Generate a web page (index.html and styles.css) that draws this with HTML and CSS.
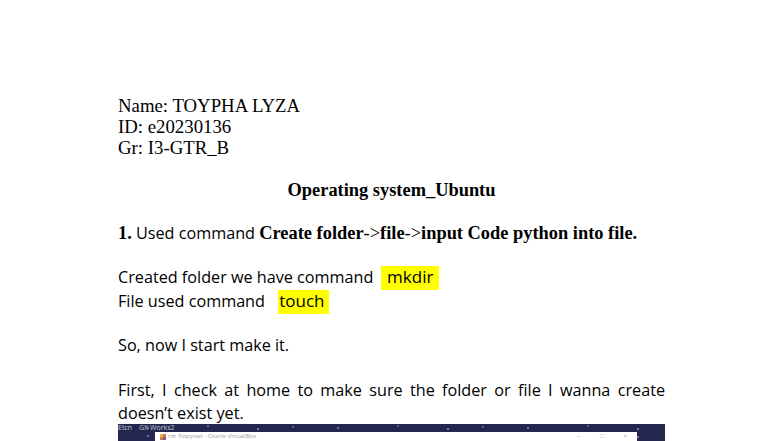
FILE: index.html
```html
<!DOCTYPE html>
<html lang="en">
<head>
<meta charset="utf-8">
<title>Operating system_Ubuntu</title>
<link rel="stylesheet" href="styles.css">
</head>
<body>
<main class="page">
  <section class="info">
    <p class="serif">Name: TOYPHA LYZA</p>
    <p class="serif">ID: e20230136</p>
    <p class="serif">Gr: I3-GTR_B</p>
  </section>
  <h1 class="title">Operating system_Ubuntu</h1>
  <p class="step"><b class="serif-b">1.</b> Used command <b class="serif-b">Create folder</b><span class="serif-b light">-&gt;</span><b class="serif-b">file</b><span class="serif-b light">-&gt;</span><b class="serif-b">input Code python into file.</b></p>
  <section class="commands">
    <p>Created folder we have command <mark class="hl hl-a">mkdir</mark></p>
    <p>File used command <mark class="hl hl-b">touch</mark></p>
  </section>
  <p class="para">So, now I start make it.</p>
  <p class="para just">First, I check at home to make sure the folder or file I wanna create doesn’t exist yet.</p>
  <div class="shot">
    <div class="shot-bar"><span>Etcn</span><span>GX Works2</span></div>
    <div class="win">
      <div class="win-title">
        <svg class="win-icon" viewBox="0 0 10 10"><rect width="10" height="10" fill="#c9803a"/><path d="M0 0h5v5H0z" fill="#e8b04a"/><path d="M5 5h5v5H5z" fill="#7a5a9a"/></svg>
        <span>rdr Flopyswt - Oracle VirtualBox</span>
        <span class="win-ctrls"><span>–</span><span>□</span><span>×</span></span>
      </div>
    </div>
  </div>
</main>
</body>
</html>
```
FILE: styles.css
```css
html, body { margin: 0; padding: 0; background: #fff; }
body { width: 784px; height: 441px; overflow: hidden; }
p, h1 { margin: 0; }
.page {
  box-sizing: border-box;
  width: 784px;
  height: 441px;
  padding: 95px 119px 0 118px;
  overflow: hidden;
  color: #000;
  font-family: "Open Sans", "Noto Sans", sans-serif;
  font-size: 16.2px;
  line-height: 21px;
}
.serif { font-family: "Liberation Serif", serif; font-size: 18.8px; }
.serif-b { font-family: "Liberation Serif", serif; font-size: 18.4px; }
.light { font-weight: normal; }
.info p { height: 21px; }
.title {
  margin-top: 22px;
  font-family: "Liberation Serif", serif;
  font-size: 18.4px;
  line-height: 21px;
  font-weight: bold;
  text-align: center;
}
.step { margin-top: 22px; }
.commands { margin-top: 22px; }
.commands p { height: 24px; }
.hl {
  display: inline-block;
  height: 24px;
  background: #ffff00;
  color: #000;
  font-size: 17px;
}
.hl-a { margin-left: 3px; padding: 0 5.5px 0 6.5px; }
.hl-b { margin-left: 9px; padding: 0 5px 0 1px; }
.para { margin-top: 21px; }
.just { margin-top: 23px; line-height: 23px; text-align: justify; }
.shot {
  margin-top: -1px;
  height: 17px;
  overflow: hidden;
  background-color: #23264f;
  background-image:
    radial-gradient(circle at 30px 4px, #8d90b8 0.6px, transparent 1px),
    radial-gradient(circle at 90px 2px, #7478a6 0.6px, transparent 1px),
    radial-gradient(circle at 140px 5px, #9a9dc4 0.6px, transparent 1px),
    radial-gradient(circle at 175px 3px, #6d71a0 0.6px, transparent 1px);
  background-size: 190px 8px;
  font-size: 7px;
  color: #c4c6d6;
}
.shot-bar { display: flex; gap: 7px; height: 8px; line-height: 8px; }
.win { margin: 0 28px 0 37px; height: 9px; background: #fff; }
.win-title {
  display: flex;
  align-items: center;
  gap: 2px;
  height: 9px;
  padding: 0 10px 0 5px;
  color: #a0a0a0;
  font-size: 6px;
  line-height: 9px;
}
.win-icon { width: 6px; height: 6px; }
.win-ctrls { display: flex; gap: 20px; margin-left: auto; font-size: 6px; }
```
